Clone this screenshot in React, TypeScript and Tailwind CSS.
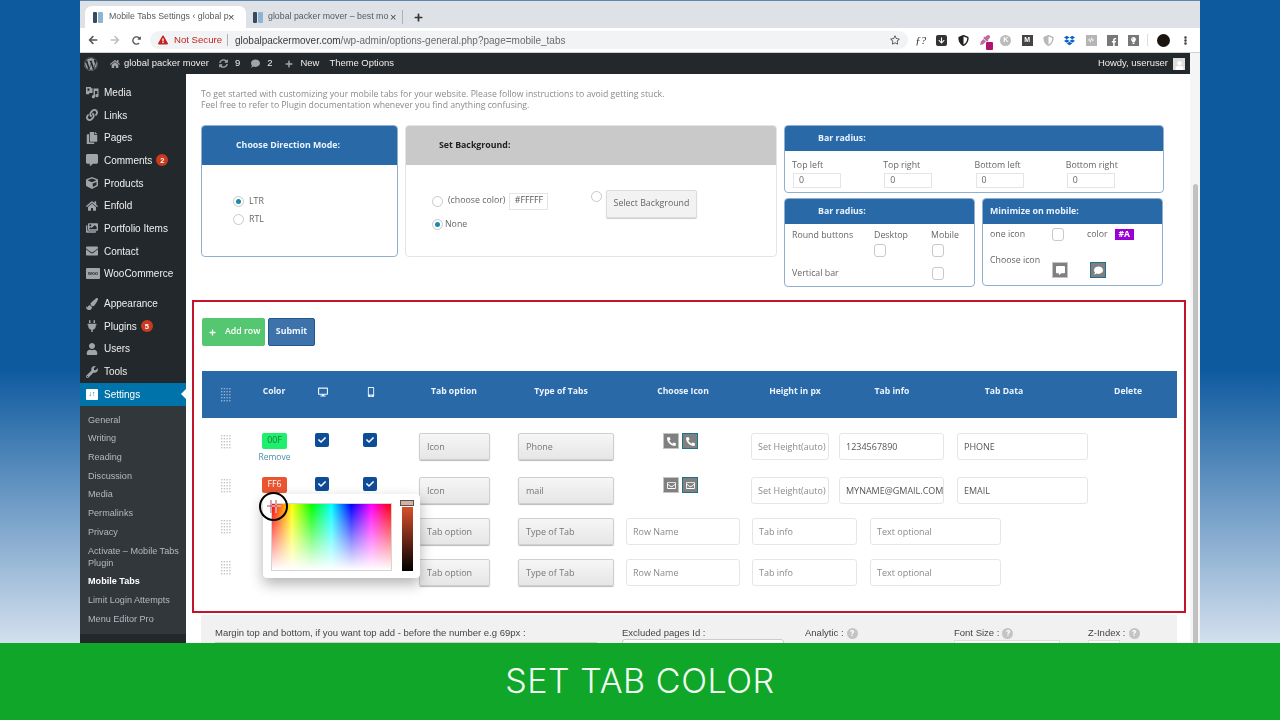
import React from "react";
import {
  FaWordpress, FaHome, FaSyncAlt, FaComment, FaPlus, FaLink, FaCopy, FaCube, FaImages, FaEnvelope,
  FaPaintBrush, FaPlug, FaUser, FaWrench, FaCheck, FaDesktop, FaMobileAlt, FaPhone, FaRegEnvelope,
  FaDropbox, FaFacebookF, FaArrowLeft, FaArrowRight, FaRedoAlt, FaExclamationTriangle, FaRegStar, FaEllipsisV, FaCommentAlt, FaShieldAlt, FaQuestion, FaCode, FaLightbulb, FaEyeDropper, FaArrowDown,
} from "react-icons/fa";

const Drag = ({ color = "#c4c4c4" }: { color?: string }) => (
  <svg width="10" height="14" viewBox="0 0 10 14" className="block">
    {[0, 1, 2, 3, 4].map((r) =>
      [0, 1, 2, 3].map((c) => <rect key={`${r}-${c}`} x={c * 2.7} y={r * 3} width="1.4" height="1.4" fill={color} />)
    )}
  </svg>
);

const MediaIcon = () => (
  <svg width="13" height="13" viewBox="0 0 13 13" fill="currentColor" className="block">
    <path d="M0 1h5v1.2h1.5V7H3.2v1.2H0V1zm1.5 1.5v2.2h2V2.5h-2z" fillRule="evenodd" />
    <path d="M7.5 2.5h5v7.2a1.6 1.6 0 1 1-1.2-1.5V5H9v5.7a1.6 1.6 0 1 1-1.5-1.6V2.5z" />
  </svg>
);

const Side = ({ icon, label, badge, active }: { icon: React.ReactNode; label: string; badge?: string; active?: boolean }) => (
  <div className={`relative h-[22.7px] flex items-center shrink-0 ${active ? "bg-[#0073aa] text-white" : "text-[#eeeeee]"}`}>
    <span className={`w-[24px] pl-[6px] flex justify-start text-[12px] ${active ? "text-white" : "text-[#a0a5aa]"}`}>{icon}</span>
    <span className="text-[10px] whitespace-nowrap">{label}</span>
    {badge && (
      <span className="ml-[4px] w-[12px] h-[12px] rounded-full bg-[#ca3a1f] text-white text-[7.5px] font-bold flex items-center justify-center">{badge}</span>
    )}
    {active && (
      <span className="absolute right-0 top-[6px] w-0 h-0 border-y-[5px] border-y-transparent border-r-[5px] border-r-white" />
    )}
  </div>
);

const Sub = ({ children, bold, tall }: { children: React.ReactNode; bold?: boolean; tall?: boolean }) => (
  <div className={`pl-[8px] pr-[2px] text-[9.1px] leading-[12px] flex items-center shrink-0 ${tall ? "h-[31px]" : "h-[18.7px]"} ${bold ? "font-bold text-white" : "text-[#b4b9be]"}`}>
    <span>{children}</span>
  </div>
);

const Radio = ({ on }: { on?: boolean }) => (
  <span className="w-[11px] h-[11px] rounded-full border border-[#c8c8c8] bg-white flex items-center justify-center shrink-0">
    {on && <span className="w-[5px] h-[5px] rounded-full bg-[#1b8aa8]" />}
  </span>
);

const Check = () => <span className="block w-[12px] h-[13px] rounded-[3px] border border-[#c9c9c9] bg-white shrink-0" />;

const Panel = ({ title, gray, head, w, h, pl, children }: { title: string; gray?: boolean; head: number; w: string; h: string; pl: string; children: React.ReactNode }) => (
  <div className={`${w} ${h} rounded-[4px] border ${gray ? "border-[#e4e4e4]" : "border-[#8fb0cf]"} bg-white overflow-hidden shrink-0 flex flex-col`}>
    <div className={`${head === 39 ? "h-[39px]" : "h-[25px]"} ${gray ? "bg-[#c9c9c9] text-[#222222]" : "bg-[#2a69a8] text-[#e8f4ff]"} ${pl} flex items-center text-[8.8px] font-bold shrink-0`}>{title}</div>
    {children}
  </div>
);

const BlueCheck = () => (
  <span className="w-[14px] h-[14px] rounded-[2px] bg-[#0f4c97] flex items-center justify-center text-white text-[8px] shrink-0"><FaCheck /></span>
);

const Select = ({ w, label }: { w: string; label: string }) => (
  <div className={`${w} h-[27px] shrink-0 rounded-[2px] border border-[#cfcfcf] bg-[linear-gradient(to_bottom,#f6f6f6,#e6e6e6)] shadow-[0_1px_1px_#bbbbbb] flex items-center pl-[7px] text-[9px] text-[#777777]`}>{label}</div>
);

const Field = ({ w, label, dark, ml }: { w: string; label: string; dark?: boolean; ml: string }) => (
  <div className={`${w} ${ml} h-[27px] shrink-0 rounded-[3px] border border-[#e6e6e6] bg-white flex items-center pl-[6px] text-[9px] overflow-hidden whitespace-nowrap ${dark ? "text-[#555555]" : "text-[#8a8a8a]"}`}>{label}</div>
);

const IconBox = ({ children, sel, ml }: { children: React.ReactNode; sel?: boolean; ml?: string }) => (
  <span className={`w-[16px] h-[16px] ${ml ?? ""} shrink-0 bg-[#808080] text-white text-[9px] flex items-center justify-center border ${sel ? "border-[#1f6f86]" : "border-[#c4c4c4]"}`}>{children}</span>
);

const FullRow = ({ color, code, textColor, remove, icon, type, info, data, h }: { color: string; code: string; textColor: string; remove?: boolean; icon: React.ReactNode; type: string; info: string; data: string; h: string }) => (
  <div className={`flex items-start ${h}`}>
    <div className="ml-[27px] w-[9px] mt-[2px] shrink-0"><Drag /></div>
    <div className="ml-[32px] w-[25px] shrink-0 flex flex-col items-center">
      <span className={`w-[25px] h-[16px] rounded-[2px] ${color} ${textColor} text-[8.8px] flex items-center justify-center`}>{code}</span>
      {remove && <span className="mt-[2px] text-[8.5px] text-[#4d8fa8] whitespace-nowrap">Remove</span>}
    </div>
    <div className="ml-[28px]"><BlueCheck /></div>
    <div className="ml-[34px]"><BlueCheck /></div>
    <div className="ml-[42px]"><Select w="w-[71px]" label="Icon" /></div>
    <div className="ml-[28px]"><Select w="w-[96px]" label={type} /></div>
    <IconBox ml="ml-[49px]">{icon}</IconBox>
    <IconBox ml="ml-[3px]" sel>{icon}</IconBox>
    <Field ml="ml-[53px]" w="w-[78px]" label="Set Height(auto)" />
    <Field ml="ml-[10px]" w="w-[105px]" label={info} dark />
    <Field ml="ml-[13px]" w="w-[131px]" label={data} dark />
  </div>
);

const EmptyRow = ({ h }: { h: string }) => (
  <div className={`flex items-start ${h}`}>
    <div className="ml-[27px] w-[9px] mt-[2px] shrink-0"><Drag /></div>
    <div className="ml-[189px]"><Select w="w-[71px]" label="Tab option" /></div>
    <div className="ml-[28px]"><Select w="w-[96px]" label="Type of Tab" /></div>
    <Field ml="ml-[12px]" w="w-[114px]" label="Row Name" />
    <Field ml="ml-[12px]" w="w-[105px]" label="Tab info" />
    <Field ml="ml-[13px]" w="w-[131px]" label="Text optional" />
  </div>
);

const Help = () => (
  <span className="ml-[3px] w-[11px] h-[11px] rounded-full bg-[#c4c4c4] text-white text-[6px] flex items-center justify-center"><FaQuestion /></span>
);

const Ext = ({ children, cls }: { children: React.ReactNode; cls: string }) => (
  <span className={`w-[21.3px] flex justify-center items-center shrink-0 ${cls}`}>{children}</span>
);

const Favicon = () => (
  <span className="w-[10px] h-[11px] flex gap-[1px] shrink-0">
    <span className="w-[4px] h-full bg-[#3a4a5e] rounded-[1px]" />
    <span className="w-[5px] h-full bg-[#8cb4d4] rounded-[1px]" />
  </span>
);

export default function App() {
  return (
    <div className="w-[1280px] h-[720px] overflow-hidden flex flex-col font-['Open_Sans',sans-serif] bg-[linear-gradient(to_bottom,#0e5a9f_0px,#0e5a9f_370px,#d4e0ee_643px)]">
      <div className="h-[643px] pl-[80px] overflow-hidden shrink-0">
        <div className="w-[1120px] h-[643px] flex flex-col overflow-hidden bg-white border-t border-[#5b86ad] blur-[0.35px]">
          {/* tab strip */}
          <div className="h-[27px] bg-[#dee1e6] flex items-end pl-[5px] shrink-0 font-['Liberation_Sans',sans-serif] text-[8.8px] text-[#555a60]">
            <div className="w-[161px] h-[22px] bg-white rounded-t-[7px] flex items-center pl-[8px]">
              <Favicon />
              <span className="ml-[6px] w-[113px] whitespace-nowrap">Mobile Tabs Settings ‹ global p</span>
              <span className="ml-[6px] text-[11px] text-[#444444]">×</span>
            </div>
            <div className="h-[22px] flex items-center pl-[7px]">
              <Favicon />
              <span className="ml-[5px] w-[118px] whitespace-nowrap">global packer mover – best mo</span>
              <span className="ml-[4px] text-[11px] text-[#444444]">×</span>
              <span className="ml-[6px] w-px h-[14px] bg-[#aeb1b6]" />
              <FaPlus className="ml-[11px] text-[9px] text-[#333333]" />
            </div>
          </div>
          {/* toolbar */}
          <div className="h-[25px] bg-white border-b border-[#d0d0d0] flex items-center shrink-0 font-['Liberation_Sans',sans-serif]">
            <FaArrowLeft className="ml-[8px] text-[10px] text-[#555555]" />
            <FaArrowRight className="ml-[12px] text-[10px] text-[#c0c0c0]" />
            <FaRedoAlt className="ml-[12px] text-[9px] text-[#555555]" />
            <div className="ml-[9px] w-[758px] h-[18px] rounded-full bg-[#f1f3f4] flex items-center pl-[8px] text-[10px] shrink-0">
              <FaExclamationTriangle className="text-[10px] text-[#c5221f]" />
              <span className="ml-[6px] text-[9.6px] text-[#c5221f]">Not Secure</span>
              <span className="ml-[5px] w-px h-[12px] bg-[#b0b0b0]" />
              <span className="ml-[7px] text-[#3a3a3a]">globalpackermover.com</span>
              <span className="text-[#6b6b6b]">/wp-admin/options-general.php?page=mobile_tabs</span>
              <FaRegStar className="ml-auto mr-[8px] text-[10px] text-[#555555]" />
            </div>
            <div className="ml-[2px] flex items-center text-[11px]">
              <Ext cls="text-[#333333] italic font-['Liberation_Serif',serif]">ƒ?</Ext>
              <Ext cls=""><span className="w-[11px] h-[11px] rounded-[2px] bg-[#333333] text-white text-[7px] flex items-center justify-center"><FaArrowDown /></span></Ext>
              <Ext cls="text-[#222222]"><FaShieldAlt /></Ext>
              <Ext cls="text-[#c06a9a] relative">
                <FaEyeDropper className="text-[10px]" />
                <span className="absolute right-[2px] top-[7px] w-[7px] h-[8px] bg-[#b2126f] rounded-[1px]" />
              </Ext>
              <Ext cls=""><span className="w-[11px] h-[11px] rounded-full bg-[#bbbbbb] text-white text-[7px] flex items-center justify-center font-bold">K</span></Ext>
              <Ext cls=""><span className="w-[11px] h-[11px] bg-[#444444] text-white text-[7px] flex items-center justify-center font-bold">M</span></Ext>
              <Ext cls="text-[#b8b8b8]"><FaShieldAlt /></Ext>
              <Ext cls="text-[#0a61d0]"><FaDropbox /></Ext>
              <Ext cls=""><span className="w-[11px] h-[11px] bg-[#b5b5b5] text-white text-[6px] flex items-center justify-center"><FaCode /></span></Ext>
              <Ext cls=""><span className="w-[11px] h-[11px] bg-[#777777] text-white text-[8px] flex items-end justify-end"><FaFacebookF /></span></Ext>
              <Ext cls=""><span className="w-[11px] h-[11px] bg-[#777777] text-white text-[7px] flex items-center justify-center"><FaLightbulb /></span></Ext>
              <span className="ml-[3px] w-px h-[12px] bg-[#dddddd]" />
              <span className="ml-[9px] w-[13px] h-[13px] rounded-full bg-[#1b1410] shrink-0" />
              <FaEllipsisV className="ml-[11px] text-[9px] text-[#444444]" />
            </div>
          </div>
          {/* body */}
          <div className="flex-1 flex min-h-0">
            <div className="w-[1110px] flex flex-col shrink-0">
              {/* admin bar */}
              <div className="h-[21px] bg-[#23282d] text-[#eeeeee] flex items-center text-[9.45px] font-['Liberation_Sans',sans-serif] shrink-0">
                <FaWordpress className="ml-[4px] text-[14px] text-[#a0a5aa]" />
                <FaHome className="ml-[12px] text-[10px] text-[#a0a5aa]" />
                <span className="ml-[4px]">global packer mover</span>
                <FaSyncAlt className="ml-[10px] text-[9px] text-[#a0a5aa]" />
                <span className="ml-[7px]">9</span>
                <FaComment className="ml-[11px] text-[9px] text-[#a0a5aa]" />
                <span className="ml-[7px]">2</span>
                <FaPlus className="ml-[13px] text-[8px] text-[#a0a5aa]" />
                <span className="ml-[7px]">New</span>
                <span className="ml-[10px]">Theme Options</span>
                <span className="ml-auto">Howdy, useruser</span>
                <span className="ml-[5px] mr-[5px] w-[12px] h-[12px] bg-[#dddddd] text-white text-[9px] flex items-end justify-center"><FaUser /></span>
              </div>
              <div className="flex-1 flex min-h-0">
                {/* sidebar */}
                <div className="w-[106px] bg-[#23282d] flex flex-col pt-[7px] shrink-0 font-['Liberation_Sans',sans-serif]">
                  <Side icon={<MediaIcon />} label="Media" />
                  <Side icon={<FaLink />} label="Links" />
                  <Side icon={<FaCopy />} label="Pages" />
                  <Side icon={<FaCommentAlt />} label="Comments" badge="2" />
                  <Side icon={<FaCube />} label="Products" />
                  <Side icon={<FaHome />} label="Enfold" />
                  <Side icon={<FaImages />} label="Portfolio Items" />
                  <Side icon={<FaEnvelope />} label="Contact" />
                  <Side icon={<span className="block w-[14px] h-[11px] rounded-[1px] bg-[#a0a5aa] text-[#23282d] text-[5px] font-bold leading-[11px] text-center">woo</span>} label="WooCommerce" />
                  <div className="h-[7px] shrink-0" />
                  <Side icon={<FaPaintBrush />} label="Appearance" />
                  <Side icon={<FaPlug />} label="Plugins" badge="5" />
                  <Side icon={<FaUser />} label="Users" />
                  <Side icon={<FaWrench />} label="Tools" />
                  <Side active icon={<span className="w-[12px] h-[11px] rounded-[1px] bg-white text-[#0073aa] text-[7px] font-bold flex items-center justify-center">↓↑</span>} label="Settings" />
                  <div className="h-[228px] bg-[#32373c] pt-[4.6px] flex flex-col shrink-0">
                    <Sub>General</Sub>
                    <Sub>Writing</Sub>
                    <Sub>Reading</Sub>
                    <Sub>Discussion</Sub>
                    <Sub>Media</Sub>
                    <Sub>Permalinks</Sub>
                    <Sub>Privacy</Sub>
                    <Sub tall>Activate – Mobile Tabs Plugin</Sub>
                    <Sub bold>Mobile Tabs</Sub>
                    <Sub>Limit Login Attempts</Sub>
                    <Sub>Menu Editor Pro</Sub>
                  </div>
                </div>
                {/* main */}
                <div className="flex-1 pl-[6px] bg-white relative min-w-0 text-[#666666]">
                  <div className="ml-[9px] pt-[15px] text-[8.7px] leading-[11px] text-[#8a8a8a] h-[51px]">
                    <p>To get started with customizing your mobile tabs for your website. Please follow instructions to avoid getting stuck.</p>
                    <p>Feel free to refer to Plugin documentation whenever you find anything confusing.</p>
                  </div>
                  <div className="ml-[9px] flex h-[175px] items-start text-[8.8px]">
                    <Panel title="Choose Direction Mode:" head={39} w="w-[197px]" h="h-[132px]" pl="pl-[34px]">
                      <div className="pl-[31px] pt-[30px] flex flex-col gap-[5px]">
                        <div className="flex items-center gap-[5px]"><Radio on /><span>LTR</span></div>
                        <div className="flex items-center gap-[5px]"><Radio /><span>RTL</span></div>
                      </div>
                    </Panel>
                    <div className="ml-[7px]">
                      <Panel title="Set Background:" gray head={39} w="w-[372px]" h="h-[132px]" pl="pl-[33px]">
                        <div className="flex pl-[26px] pt-[27px]">
                          <div className="w-[159px]">
                            <div className="flex items-center h-[18px]">
                              <Radio />
                              <span className="ml-[5px]">(choose color)</span>
                              <span className="ml-[4px] w-[39px] h-[17px] border border-[#e5e5e5] flex items-center justify-center text-[#555555]">#FFFFF</span>
                            </div>
                            <div className="flex items-center mt-[8px]">
                              <Radio on />
                              <span className="ml-[2px]">None</span>
                            </div>
                          </div>
                          <div className="-mt-[1px]"><Radio /></div>
                          <div className="ml-[4px] -mt-[2px] w-[91px] h-[28px] bg-[#f2f2f2] border border-[#dddddd] rounded-[2px] shadow-[0_1px_1px_#cccccc] flex items-center justify-center">Select Background</div>
                        </div>
                      </Panel>
                    </div>
                    <div className="ml-[7px] w-[380px] shrink-0 flex flex-col gap-[5px]">
                      <Panel title="Bar radius:" head={25} w="w-[380px]" h="h-[68px]" pl="pl-[33px]">
                        <div className="grid grid-cols-4 w-[372px] pl-[7px] pt-[9px] leading-[11px]">
                          {["Top left", "Top right", "Bottom left", "Bottom right"].map((t) => (
                            <div key={t}>
                              <div>{t}</div>
                              <div className="ml-[1px] mt-[2px] w-[48px] h-[15px] border border-[#e5e5e5] pl-[5px] flex items-center">0</div>
                            </div>
                          ))}
                        </div>
                      </Panel>
                      <div className="flex">
                        <Panel title="Bar radius:" head={25} w="w-[191px]" h="h-[89px]" pl="pl-[33px]">
                          <div className="flex pl-[7px] pt-[5px]">
                            <div className="w-[82px] flex flex-col">
                              <span className="h-[12px] leading-[12px]">Round buttons</span>
                              <span className="mt-[26px] leading-[12px]">Vertical bar</span>
                            </div>
                            <div className="w-[57px]">
                              <div className="leading-[12px]">Desktop</div>
                              <div className="mt-[3px]"><Check /></div>
                            </div>
                            <div>
                              <div className="leading-[12px]">Mobile</div>
                              <div className="ml-[1px] mt-[3px]"><Check /></div>
                              <div className="ml-[1px] mt-[10px]"><Check /></div>
                            </div>
                          </div>
                        </Panel>
                        <div className="ml-[7px]">
                          <Panel title="Minimize on mobile:" head={25} w="w-[181px]" h="h-[88px]" pl="pl-[7px]">
                            <div className="pl-[7px] pt-[4px]">
                              <div className="flex items-center h-[13px]">
                                <span className="w-[62px]">one icon</span>
                                <Check />
                                <span className="ml-[23px]">color</span>
                                <span className="ml-[7px] w-[19px] h-[11px] bg-[#9a00d6] text-white font-bold text-[8.5px] flex items-center justify-center">#A</span>
                              </div>
                              <div className="flex items-start mt-[7px]">
                                <span className="w-[62px] leading-[12px] mt-[6px]">Choose icon</span>
                                <span className="mt-[14px] flex">
                                  <IconBox><FaCommentAlt /></IconBox>
                                  <IconBox ml="ml-[22px]" sel><FaComment /></IconBox>
                                </span>
                              </div>
                            </div>
                          </Panel>
                        </div>
                      </div>
                    </div>
                  </div>
                  {/* red box */}
                  <div className="w-[994px] h-[313px] border-2 border-[#c4142b] bg-white relative text-[9px] shrink-0">
                    <div className="ml-[8px] mt-[16px] flex gap-[3px] h-[28px]">
                      <div className="w-[63px] bg-[#54c770] rounded-[2px] text-white flex items-center pl-[7px] text-[8.8px] font-semibold">
                        <FaPlus className="text-[7px]" />
                        <span className="ml-[9px]">Add row</span>
                      </div>
                      <div className="w-[47px] bg-[#3e72ab] border border-[#215a8a] rounded-[2px] text-[#eef6ff] flex items-center justify-center text-[8.8px] font-bold">Submit</div>
                    </div>
                    <div className="ml-[8px] mt-[25px] w-[975px] h-[47px] bg-[#2a69a8] text-[#eaf4ff] font-bold text-[8.6px] pb-[6px] flex items-center">
                      <div className="ml-[19px] mt-[6px] w-[10px] shrink-0"><Drag color="#8fb0d0" /></div>
                      <span className="ml-[20px] w-[46px] text-center shrink-0">Color</span>
                      <span className="ml-[4px] w-[44px] flex justify-center shrink-0 text-[10px]"><FaDesktop /></span>
                      <span className="w-[52px] flex justify-center shrink-0 text-[10px]"><FaMobileAlt /></span>
                      <span className="ml-[22px] w-[70px] text-center shrink-0">Tab option</span>
                      <span className="ml-[37px] w-[70px] text-center shrink-0">Type of Tabs</span>
                      <span className="ml-[52px] w-[70px] text-center shrink-0">Choose Icon</span>
                      <span className="ml-[42px] w-[70px] text-center shrink-0">Height in px</span>
                      <span className="ml-[27px] w-[70px] text-center shrink-0">Tab info</span>
                      <span className="ml-[42px] w-[70px] text-center shrink-0">Tab Data</span>
                      <span className="ml-[54px] w-[70px] text-center shrink-0">Delete</span>
                    </div>
                    <div className="mt-[15px]">
                      <FullRow h="h-[44px]" color="bg-[#1cf06c]" textColor="text-[#1d7a3f]" code="00F" remove icon={<FaPhone className="scale-x-[-1]" />} type="Phone" info="1234567890" data="PHONE" />
                      <FullRow h="h-[41px]" color="bg-[#ea5530]" textColor="text-white" code="FF6" icon={<FaRegEnvelope />} type="mail" info="MYNAME@GMAIL.COM" data="EMAIL" />
                      <EmptyRow h="h-[41px]" />
                      <EmptyRow h="h-[28px]" />
                    </div>
                    {/* colour picker */}
                    <div className="absolute left-[69px] top-[192px] w-[157px] h-[84px] bg-white rounded-[4px] shadow-[0_6px_14px_rgba(0,0,0,0.3)] flex pl-[8px] pt-[9px]">
                      <div className="w-[121px] h-[68px] border border-[#d5d5d5] bg-[linear-gradient(to_right,#f00,#ff0,#0f0,#0ff,#00f,#f0f,#f00)] shrink-0">
                        <div className="w-full h-full bg-[linear-gradient(to_bottom,rgba(255,255,255,0),#ffffff)]" />
                      </div>
                      <div className="ml-[8px] w-[14px] shrink-0 flex flex-col items-center -mt-[3px]">
                        <span className="w-[14px] h-[6px] bg-[#d8b0a0] border border-[#555555] shrink-0" />
                        <span className="w-[11px] h-[64px] mt-[1px] bg-[linear-gradient(to_bottom,#d8502c,#000000)]" />
                      </div>
                    </div>
                    {/* cursor */}
                    <div className="absolute left-[65px] top-[190px] w-[29px] h-[29px] rounded-full border-2 border-black flex items-center justify-center">
                      <svg width="16" height="16" viewBox="0 0 16 16" className="block">
                        <path d="M5 1v13M10 1v13M1 7h14" stroke="#ffffff" strokeWidth="2" fill="none" />
                        <path d="M5 1v13M10 1v13M1 7h14" stroke="#b5475a" strokeWidth="1" fill="none" />
                      </svg>
                    </div>
                  </div>
                  {/* bottom settings */}
                  <div className="ml-[9px] mt-[2px] w-[976px] h-[60px] bg-[#f1f1f1] flex items-start pt-[12px] text-[9.5px] text-[#444444] font-['Liberation_Sans',sans-serif]">
                    <div className="ml-[14px] w-[407px] shrink-0">
                      <div className="leading-[12px]">Margin top and bottom, if you want top add - before the number e.g 69px :</div>
                      <div className="mt-[3px] w-[382px] h-[20px] border border-[#cccccc] bg-white" />
                    </div>
                    <div className="w-[183px] shrink-0">
                      <div className="leading-[12px]">Excluded pages Id :</div>
                      <div className="mt-[0px] w-[162px] h-[20px] border border-[#cccccc] bg-white rounded-[3px]" />
                    </div>
                    <div className="w-[149px] shrink-0 flex items-center leading-[12px]"><span>Analytic :</span><Help /></div>
                    <div className="w-[134px] shrink-0">
                      <div className="flex items-center leading-[12px]"><span>Font Size :</span><Help /></div>
                      <div className="mt-[1px] w-[106px] h-[20px] border border-[#dddddd] bg-white" />
                    </div>
                    <div className="shrink-0">
                      <div className="flex items-center leading-[12px]"><span>Z-Index :</span><Help /></div>
                      <div className="mt-[1px] w-[32px] h-[20px] border border-[#dddddd] bg-white" />
                    </div>
                  </div>
                </div>
              </div>
            </div>
            {/* scrollbar */}
            <div className="w-[10px] bg-[#f5f5f5] pt-[131px] pl-[3px] shrink-0">
              <div className="w-[5px] h-[500px] rounded-full bg-[#c1c1c1]" />
            </div>
          </div>
        </div>
      </div>
      <div className="h-[77px] bg-[#0fa62a] pb-[3px] flex items-center justify-center text-[#f2fff2] text-[34px] font-light tracking-[0.55px] font-['Inter',sans-serif] shrink-0">SET TAB COLOR</div>
    </div>
  );
}
